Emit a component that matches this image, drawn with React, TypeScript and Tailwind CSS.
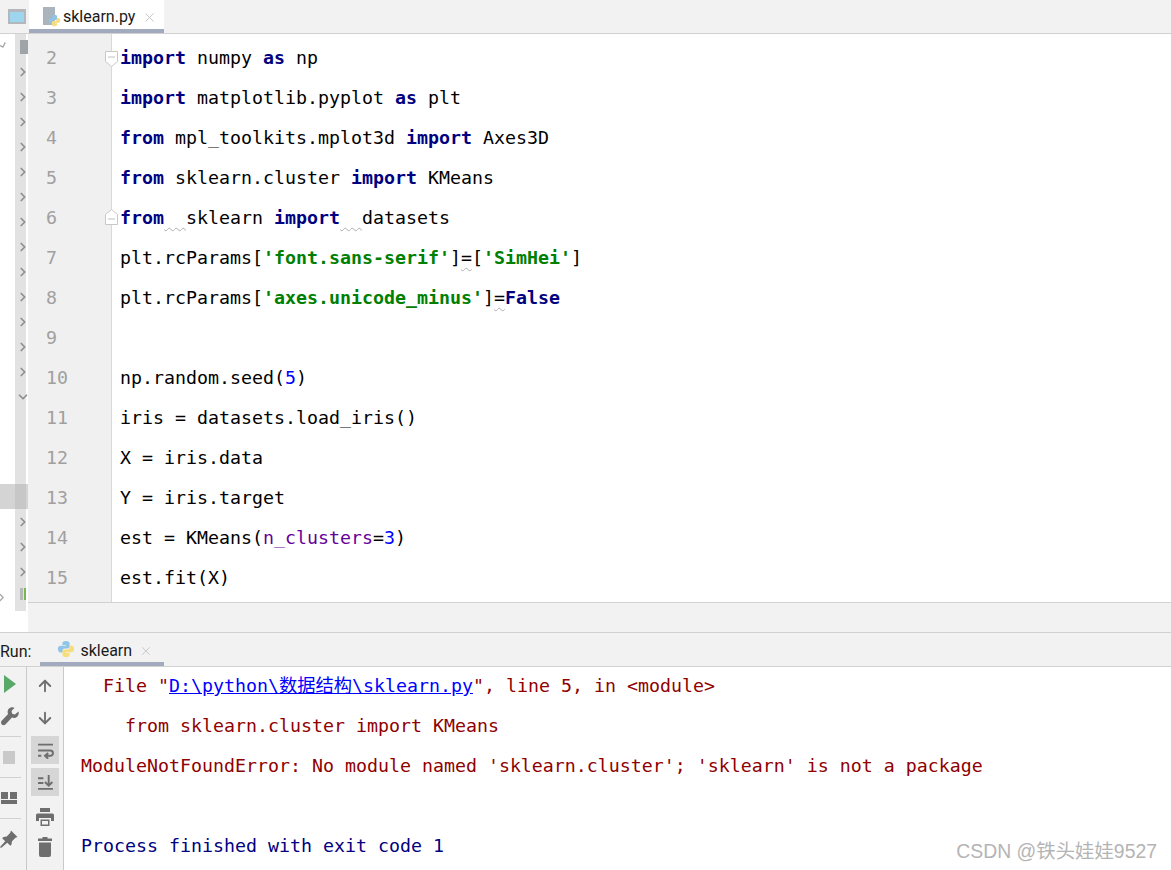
import { ChevronRight, ChevronDown, ArrowUp, ArrowDown, X } from 'lucide-react'
import type { ReactNode } from 'react'

const mono = "font-['DejaVu_Sans_Mono','Liberation_Mono',monospace]"
const ui = "font-['Roboto','Noto_Sans',sans-serif]"

function Kw({ children }: { children: ReactNode }) {
  return <span className="font-bold text-[#000080]">{children}</span>
}
function Str({ children }: { children: ReactNode }) {
  return <span className="font-bold text-[#008000]">{children}</span>
}
function Squiggle({ children }: { children: ReactNode }) {
  return (
    <span className="underline decoration-wavy decoration-[#b0b0b0] decoration-1 underline-offset-3">{children}</span>
  )
}

const codeLines: { n: number; code: ReactNode }[] = [
  { n: 2, code: <><Kw>import</Kw> numpy <Kw>as</Kw> np</> },
  { n: 3, code: <><Kw>import</Kw> matplotlib.pyplot <Kw>as</Kw> plt</> },
  { n: 4, code: <><Kw>from</Kw> mpl_toolkits.mplot3d <Kw>import</Kw> Axes3D</> },
  { n: 5, code: <><Kw>from</Kw> sklearn.cluster <Kw>import</Kw> KMeans</> },
  { n: 6, code: <><Kw>from</Kw><Squiggle>{'  '}</Squiggle>sklearn <Kw>import</Kw><Squiggle>{'  '}</Squiggle>datasets</> },
  { n: 7, code: <>plt.rcParams[<Str>'font.sans-serif'</Str>]<Squiggle>=</Squiggle>[<Str>'SimHei'</Str>]</> },
  { n: 8, code: <>plt.rcParams[<Str>'axes.unicode_minus'</Str>]<Squiggle>=</Squiggle><Kw>False</Kw></> },
  { n: 9, code: <>{' '}</> },
  { n: 10, code: <>np.random.seed(<span className="text-[#0000ff]">5</span>)</> },
  { n: 11, code: <>iris = datasets.load_iris()</> },
  { n: 12, code: <>X = iris.data</> },
  { n: 13, code: <>Y = iris.target</> },
  { n: 14, code: <>est = KMeans(<span className="text-[#660099]">n_clusters</span>=<span className="text-[#0000ff]">3</span>)</> },
  { n: 15, code: <>est.fit(X)</> },
]

// r = collapsed, d = expanded, '' = empty row
const structureRows = ['r', 'r', 'r', 'r', 'r', 'r', 'r', 'r', 'r', 'r', 'r', 'r', 'r', 'd', '', '', '', '', 'r', 'r', 'r']

function PythonIcon({ className }: { className?: string }) {
  return (
    <svg viewBox="0 0 16 16" className={className}>
      <path d="M8 .8C5.600.8 4.800 1.800 4.800 3v1.500H8.200v.7H3.200C1.800 5.200.8 6.300.8 8s1 3.200 2.400 3.200H5V9.300C5 8.200 5.800 7.500 6.800 7.500h2.600c1 0 1.800-.7 1.800-1.700V3c0-1.200-1.200-2.200-3.200-2.200z" fill="#8fc4e6" />
      <path d="M8 15.200c2.400 0 3.200-1 3.200-2.200v-1.500H7.800v-.7h5c1.400 0 2.400-1.100 2.400-2.800s-1-3.200-2.400-3.200H11v1.900c0 1.100-.8 1.800-1.800 1.800H6.600c-1 0-1.800.7-1.800 1.700V13c0 1.200 1.200 2.200 3.200 2.200z" fill="#f6dd7e" />
    </svg>
  )
}

function FoldMark({ up, className }: { up?: boolean; className: string }) {
  return (
    <svg viewBox="0 0 13 16" className={`absolute h-[16px] w-[13px] ${className}`}>
      <path
        d={up ? 'M.5 15.500h12V5.500L6.500.5.500 5.500z' : 'M.5.500h12v10l-6 5-6-5z'}
        fill="#ffffff"
        stroke="#c8c8c8"
      />
      <path d={up ? 'M3 10h7' : 'M3 6h7'} stroke="#c0c0c0" />
    </svg>
  )
}

function ToolIcon({ children, active }: { children: ReactNode; active?: boolean }) {
  return (
    <div className={`flex h-[28px] w-[28px] items-center justify-center ${active ? 'bg-[#d6d6d6]' : ''}`}>
      {children}
    </div>
  )
}

export default function App() {
  return (
    <div className={`flex h-[870px] w-[1171px] flex-col overflow-hidden bg-white ${ui}`}>
      {/* tab bar */}
      <div className="flex h-[34px] shrink-0 border-b border-[#d1d1d1] bg-[#f2f2f2]">
        <div className="flex w-[29px] items-center pl-[8px]">
          <div className="h-[15px] w-[18px] border-2 border-t-[3px] border-[#b4b8bc] bg-[#9fd6ef]" />
        </div>
        <div className="flex w-[135px] items-center border-b-[4px] border-[#a1abbd] bg-white pt-[5px] pl-[14px]">
          <div className="relative mt-[-3px] h-[18px] w-[17px]">
            <div className="h-[18px] w-[12px] bg-[#a9b4bc]" />
            <PythonIcon className="absolute right-[-1px] bottom-[-2px] h-[13px] w-[13px]" />
          </div>
          <span className="ml-[3px] text-[16px] leading-none text-[#1a1a1a]">sklearn.py</span>
          <X size={15} strokeWidth={1.5} className="ml-[7px] text-[#c4c4c4]" />
        </div>
      </div>

      {/* editor + breadcrumb, with the structure strip on the left */}
      <div className="relative flex h-[598px] shrink-0">
        <div className="flex w-[15px] shrink-0 flex-col justify-between bg-white pt-[5px] pb-[28px]">
          <ChevronDown size={13} strokeWidth={2.5} className="ml-[-4px] rotate-[-20deg] text-[#a8a8a8]" />
          <ChevronRight size={13} strokeWidth={2.5} className="ml-[-5px] text-[#a8a8a8]" />
        </div>
        <div className="mb-[20px] flex w-[13px] shrink-0 flex-col border-r-2 border-b border-r-white border-b-white bg-[#e2e2e2]">
          <div className="mt-[6px] ml-[5px] h-[14px] w-[8px] bg-[#9fa4a8]" />
          <div className="mt-[5px]">
            {structureRows.map((r, i) => (
              <div key={i} className="flex h-[25px] w-[15px] items-center justify-end">
                {r === 'r' && <ChevronRight size={14} strokeWidth={3} className="text-[#8f8f8f]" />}
                {r === 'd' && <ChevronDown size={14} strokeWidth={3} className="text-[#8f8f8f]" />}
              </div>
            ))}
          </div>
          <div className="mt-[4px] ml-[5px] flex h-[12px]">
            <div className="w-[3px] bg-[#b8b8b8]" />
            <div className="ml-px w-[3px] bg-[#76b852]" />
          </div>
        </div>
        <div className="flex min-w-0 flex-1 flex-col">
          <div className="flex h-[568px] shrink-0">
            <div className="w-[84px] shrink-0 border-r border-[#d8d8d8] bg-[#f0f0f0] pt-[4px]">
              {codeLines.map((l) => (
                <div key={l.n} className={`h-[40px] pl-[18px] text-[18.27px] leading-[40px] text-[#a0a0a0] ${mono}`}>
                  {l.n}
                </div>
              ))}
            </div>
            <div className={`min-w-0 flex-1 overflow-hidden pt-[4px] pl-[8px] text-[18.27px] whitespace-pre text-[#000000] ${mono}`}>
              {codeLines.map((l) => (
                <div key={l.n} className="h-[40px] leading-[40px]">{l.code}</div>
              ))}
            </div>
          </div>
          <div className="h-[30px] shrink-0 border-t border-[#d1d1d1] bg-[#f2f2f2]" />
        </div>
        <FoldMark className="top-[17px] left-[105px]" />
        <FoldMark up className="top-[175px] left-[105px]" />
        <div className="absolute top-[450px] left-0 h-[25px] w-[28px] bg-[#b0b0b0]/55" />
      </div>

      {/* run header */}
      <div className="flex h-[35px] shrink-0 items-center border-y border-[#d1d1d1] bg-[#f2f2f2]">
        <span className="pt-[4px] text-[16px] leading-none text-[#1a1a1a]">Run:</span>
        <div className="ml-[9px] flex h-full w-[124px] items-center border-b-[4px] border-[#a1abbd] pt-[6px] pl-[17px]">
          <PythonIcon className="mt-[-4px] h-[18px] w-[18px]" />
          <span className="ml-[5px] text-[16px] leading-none text-[#1a1a1a]">sklearn</span>
          <X size={14} strokeWidth={1.5} className="ml-[7px] text-[#c4c4c4]" />
        </div>
      </div>

      {/* run panel */}
      <div className="flex min-h-0 flex-1">
        <div className="flex w-[27px] shrink-0 flex-col items-start border-r border-[#c9c9c9] bg-[#f2f2f2] pt-[8px]">
          <svg viewBox="0 0 12 18" className="ml-[4px] h-[18px] w-[12px]"><path d="M0 0l12 9-12 9z" fill="#59a869" /></svg>
          <svg viewBox="0 0 18 20" className="mt-[14px] ml-px h-[20px] w-[18px]" fill="#6e6e6e">
            <path d="M17.500 4.500l-3.600 3-2.700-.8-.7-2.700L13.600.7C11.600-.3 9 .1 7.700 1.700 6.400 3.200 6.300 5.300 7.100 7L.7 13.800c-.9 1-.9 2.600.1 3.600s2.600 1 3.600 0l6.600-6.800c1.700.8 3.800.5 5.200-.9 1.400-1.300 1.900-3.300 1.300-5.200z" />
          </svg>
          <div className="mt-[9px] h-px w-[21px] bg-[#d1d1d1]" />
          <div className="mt-[14px] ml-[3px] h-[13px] w-[12px] bg-[#c9c9c9]" />
          <div className="mt-[13px] h-px w-[21px] bg-[#d1d1d1]" />
          <div className="mt-[14px] ml-px flex h-[12px] w-[16px] flex-wrap content-between justify-between">
            <div className="h-[7px] w-[7px] bg-[#6e6e6e]" />
            <div className="h-[7px] w-[7px] bg-[#6e6e6e]" />
            <div className="h-[4px] w-[16px] bg-[#6e6e6e]" />
          </div>
          <div className="mt-[14px] h-px w-[21px] bg-[#d1d1d1]" />
          <svg viewBox="0 0 18 18" className="mt-[11px] h-[18px] w-[18px]" fill="#6e6e6e">
            <path d="M11 .5l6.500 6.500-2 .8-3.500 3.400-.5 3.300-1.200 1.200-3-3L1 18l-1-1 5.200-5.800-3-3 1.200-1.200 3.300-.5 3.400-3.500z" />
          </svg>
        </div>
        <div className="flex w-[37px] shrink-0 flex-col items-center gap-[4px] border-r border-[#c9c9c9] bg-[#f2f2f2] pt-[5px]">
          <ToolIcon><ArrowUp size={18} strokeWidth={2.5} className="text-[#6e6e6e]" /></ToolIcon>
          <ToolIcon><ArrowDown size={18} strokeWidth={2.5} className="text-[#6e6e6e]" /></ToolIcon>
          <ToolIcon active>
            <svg viewBox="0 0 16 16" className="h-[17px] w-[17px]" fill="none" stroke="#6e6e6e" strokeWidth="1.800">
              <path d="M1 2.500h14M1 8h11.500a2.300 2.300 0 0 1 0 5H8M10.500 10.300L7.500 13l3 2.700M1 13h3" />
            </svg>
          </ToolIcon>
          <ToolIcon active>
            <svg viewBox="0 0 16 16" className="h-[17px] w-[17px]" fill="none" stroke="#6e6e6e" strokeWidth="1.800">
              <path d="M1 4h5M1 8.500h5M1 14h14M11 1v10M7.500 7.500L11 11l3.500-3.500" />
            </svg>
          </ToolIcon>
          <ToolIcon>
            <svg viewBox="0 0 18 18" className="mt-[6px] h-[18px] w-[18px]" fill="#6e6e6e">
              <path d="M4 0h10v4H4zM1.500 5.500h15A1.500 1.500 0 0 1 18 7v6h-3v-3H3v3H0V7a1.500 1.500 0 0 1 1.500-1.500zM4.500 11.500h9V18h-9zm1.500 1.500v3.500h6V13z" fillRule="evenodd" />
            </svg>
          </ToolIcon>
          <ToolIcon>
            <svg viewBox="0 0 14 20" className="mt-[2px] h-[20px] w-[14px]" fill="#6e6e6e">
              <path d="M4.500 0h5v1.500H14V4H0V1.500h4.500zM1 5.500h12V18a2 2 0 0 1-2 2H3a2 2 0 0 1-2-2z" />
            </svg>
          </ToolIcon>
        </div>
        <div className={`relative flex-1 pl-[17px] text-[18.27px] whitespace-pre ${mono}`}>
          <div className="h-[39px] leading-[34px] text-[#8f0000]">
            {'  File "'}
            <span className="text-[#0000ff] underline">D:\python\<span className="font-['Noto_Sans_CJK_SC']">数据结构</span>\sklearn.py</span>
            {'", line 5, in <module>'}
          </div>
          <div className="h-[40px] leading-[40px] text-[#8f0000]">{'    from sklearn.cluster import KMeans'}</div>
          <div className="h-[40px] leading-[40px] text-[#8f0000]">ModuleNotFoundError: No module named 'sklearn.cluster'; 'sklearn' is not a package</div>
          <div className="h-[40px]" />
          <div className="h-[40px] leading-[40px] text-[#000080]">Process finished with exit code 1</div>
          <span className="absolute top-[170px] right-[14px] font-['Liberation_Sans','Noto_Sans_CJK_SC',sans-serif] text-[19.4px] text-[#b4b4b4]">CSDN @铁头娃娃9527</span>
        </div>
      </div>
    </div>
  )
}
